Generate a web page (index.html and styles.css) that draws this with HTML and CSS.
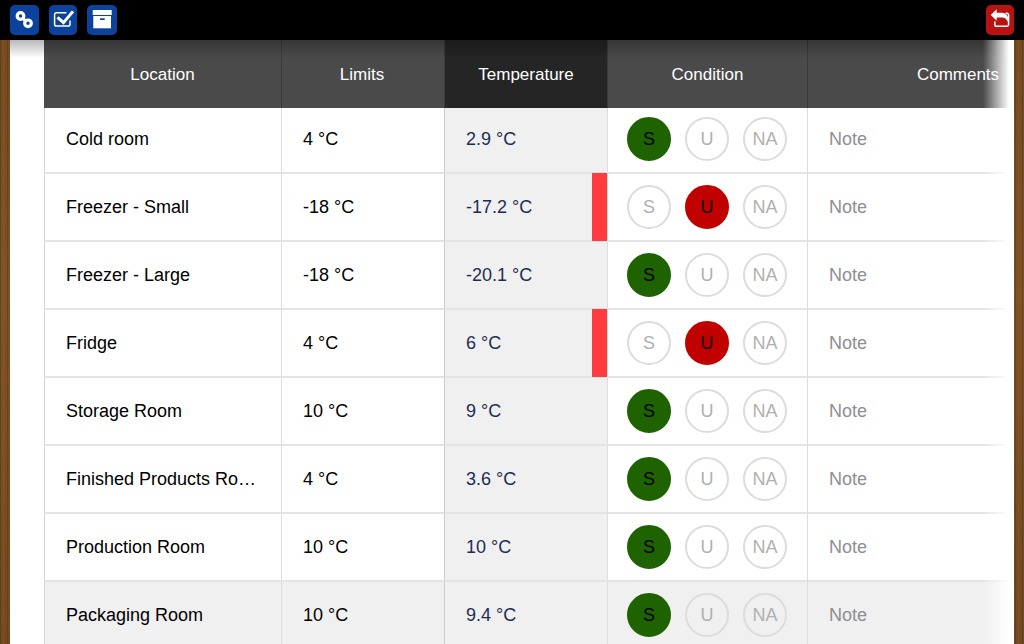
FILE: index.html

```html
<!DOCTYPE html>
<html lang="en">
<head>
    <meta charset="UTF-8">
    <meta name="viewport" content="width=device-width, initial-scale=1.0">
    <title>Temperature Log</title>
    <link rel="stylesheet" href="styles.css">
</head>
<body>
    <div class="toolbar">
        <div class="toolbar-group">
            <button class="tool-btn tool-blue" type="button" aria-label="Links">
                <svg viewBox="0 0 24 24" width="24" height="24"><g fill="none" stroke="#fff"><circle cx="8.5" cy="8" r="3.3" stroke-width="3.2"/><circle cx="16" cy="15.3" r="3.3" stroke-width="3.2"/><path d="M10.5 10l3.5 3.4" stroke-width="3"/></g></svg>
            </button>
            <button class="tool-btn tool-blue" type="button" aria-label="Tasks">
                <svg viewBox="0 0 24 24" width="24" height="24"><path d="M19 12.5v3.7a1.8 1.8 0 0 1-1.8 1.8H5.4a1.8 1.8 0 0 1-1.8-1.8V6.5a1.8 1.8 0 0 1 1.8-1.8h10" fill="none" stroke="#fff" stroke-width="1.5"/><path d="M6.5 9.3l6 5.4L22 3.4" fill="none" stroke="#fff" stroke-width="3"/></svg>
            </button>
            <button class="tool-btn tool-blue tool-wide" type="button" aria-label="Archive">
                <svg viewBox="0 0 26 24" width="26" height="24"><path d="M3.7 2h19v5h-19z" fill="#fff"/><path d="M4.3 8h17.7v12.3H4.3z" fill="#fff"/><path d="M11 10.3h4.7V12H11z" fill="#0b429c"/></svg>
            </button>
        </div>
        <button class="tool-btn tool-red" type="button" aria-label="Back">
            <svg viewBox="0 0 24 24" width="24" height="24"><path d="M6.8 13.5v3a1.8 1.8 0 0 0 1.8 1.8h10.200a1.800 1.800 0 0 0 1.800-1.800V7a1.800 1.800 0 0 0-1.800-1.800h-1" fill="none" stroke="#fff" stroke-width="1.5"/><path d="M2.700 7L8.700 1.300v3.400H14c4.500 0 6.800 3 6.800 11.300-1.500-4.500-3.800-6.500-6.800-6.500H8.700v3.200z" fill="#fff"/></svg>
        </button>
    </div>

    <div class="sheet">
        <table class="log-table">
            <thead>
                <tr>
                    <th class="col-location">Location</th>
                    <th class="col-limits">Limits</th>
                    <th class="col-temp">Temperature</th>
                    <th class="col-condition">Condition</th>
                    <th class="col-comments">Comments</th>
                </tr>
            </thead>
            <tbody>
                <tr>
                    <td class="cell-name">Cold room</td>
                    <td>4 °C</td>
                    <td class="cell-temp">2.9 °C</td>
                    <td><div class="choices"><span class="choice safe">S</span><span class="choice">U</span><span class="choice">NA</span></div></td>
                    <td class="cell-note">Note</td>
                </tr>
                <tr>
                    <td class="cell-name">Freezer - Small</td>
                    <td>-18 °C</td>
                    <td class="cell-temp out-of-range">-17.2 °C</td>
                    <td><div class="choices"><span class="choice">S</span><span class="choice unsafe">U</span><span class="choice">NA</span></div></td>
                    <td class="cell-note">Note</td>
                </tr>
                <tr>
                    <td class="cell-name">Freezer - Large</td>
                    <td>-18 °C</td>
                    <td class="cell-temp">-20.1 °C</td>
                    <td><div class="choices"><span class="choice safe">S</span><span class="choice">U</span><span class="choice">NA</span></div></td>
                    <td class="cell-note">Note</td>
                </tr>
                <tr>
                    <td class="cell-name">Fridge</td>
                    <td>4 °C</td>
                    <td class="cell-temp out-of-range">6 °C</td>
                    <td><div class="choices"><span class="choice">S</span><span class="choice unsafe">U</span><span class="choice">NA</span></div></td>
                    <td class="cell-note">Note</td>
                </tr>
                <tr>
                    <td class="cell-name">Storage Room</td>
                    <td>10 °C</td>
                    <td class="cell-temp">9 °C</td>
                    <td><div class="choices"><span class="choice safe">S</span><span class="choice">U</span><span class="choice">NA</span></div></td>
                    <td class="cell-note">Note</td>
                </tr>
                <tr>
                    <td class="cell-name"><div class="truncate">Finished Products Room</div></td>
                    <td>4 °C</td>
                    <td class="cell-temp">3.6 °C</td>
                    <td><div class="choices"><span class="choice safe">S</span><span class="choice">U</span><span class="choice">NA</span></div></td>
                    <td class="cell-note">Note</td>
                </tr>
                <tr>
                    <td class="cell-name">Production Room</td>
                    <td>10 °C</td>
                    <td class="cell-temp">10 °C</td>
                    <td><div class="choices"><span class="choice safe">S</span><span class="choice">U</span><span class="choice">NA</span></div></td>
                    <td class="cell-note">Note</td>
                </tr>
                <tr class="row-active">
                    <td class="cell-name">Packaging Room</td>
                    <td>10 °C</td>
                    <td class="cell-temp">9.4 °C</td>
                    <td><div class="choices"><span class="choice safe">S</span><span class="choice">U</span><span class="choice">NA</span></div></td>
                    <td class="cell-note">Note</td>
                </tr>
            </tbody>
        </table>
        <div class="top-shade"></div>
        <div class="edge-fade"></div>
    </div>
</body>
</html>
```

FILE: styles.css

```css
* {
    box-sizing: border-box;
}

html, body {
    height: 100%;
}

body {
    margin: 0;
    overflow: hidden;
    display: flex;
    flex-direction: column;
    font-family: "Liberation Sans", Arial, sans-serif;
    color: #000;
    background-color: #7a4f24;
    background-image:
        repeating-linear-gradient(90deg, rgba(40, 20, 5, 0.22) 0 1px, transparent 1px 3px, rgba(160, 110, 60, 0.2) 3px 4px, transparent 4px 7px),
        linear-gradient(rgba(60, 35, 10, 0.12), rgba(150, 105, 55, 0.12) 45%, rgba(60, 35, 10, 0.12));
}

.toolbar {
    flex: none;
    height: 40px;
    padding: 5px 10px;
    display: flex;
    justify-content: space-between;
    align-items: flex-start;
    background-color: #000;
}

.toolbar-group {
    display: flex;
    gap: 10px;
}

.tool-btn {
    width: 28.5px;
    height: 30px;
    padding: 0;
    border: none;
    border-radius: 5px;
    display: flex;
    align-items: center;
    justify-content: center;
}

.tool-wide {
    width: 30px;
}

.tool-blue {
    background-color: #0b429c;
}

.tool-red {
    width: 28px;
    background-color: #b91212;
}

.sheet {
    position: relative;
    flex: 1;
    margin: 0 10px;
    padding-left: 34px;
    overflow: hidden;
    background-color: #fff;
}

.log-table {
    width: 1065px;
    table-layout: fixed;
    border-collapse: separate;
    border-spacing: 0;
    font-size: 18px;
}

.log-table th {
    height: 68px;
    padding: 2px 0 0;
    font-size: 17px;
    font-weight: normal;
    color: #fff;
    background-color: #4a4a4a;
    border-right: 1px solid #3a3a3a;
}

.log-table th.col-temp {
    background-color: #252525;
}

.log-table th.col-limits {
    padding-right: 2px;
}

.col-location {
    width: 238px;
}

.col-limits {
    width: 163px;
}

.col-temp {
    width: 163px;
}

.col-condition {
    width: 200px;
}

.col-comments {
    width: 301px;
}

.log-table td {
    height: 68px;
    padding: 0 21px;
    border-right: 1px solid #dcdcdc;
    border-bottom: 2px solid #e4e4e4;
}

.log-table td:first-child {
    border-left: 1px solid #d4d4d4;
}

/* the first row starts a little way under the header */
.log-table tbody tr:first-child td {
    height: 66px;
    padding-bottom: 2px;
}

.log-table td:nth-child(2) {
    border-right-color: #cccccc;
}

.log-table td.cell-temp {
    position: relative;
    color: #1c2c52;
    background-color: #f0f0f0;
}

.out-of-range::after {
    content: "";
    position: absolute;
    top: -1px;
    right: 0;
    bottom: -1px;
    width: 15px;
    background-color: #ff3b3f;
}

.log-table td.cell-note {
    color: #8e8e93;
    border-right: none;
}

.log-table .row-active td {
    background-color: #f0f0f0;
}

.truncate {
    overflow: hidden;
    white-space: nowrap;
    text-overflow: ellipsis;
}

.choices {
    display: flex;
    gap: 14px;
    margin-left: -2px;
}

.choice {
    flex: none;
    width: 44px;
    height: 44px;
    border-radius: 50%;
    display: flex;
    align-items: center;
    justify-content: center;
    border: 2px solid #dcdcdc;
    color: #b0b0b0;
    background-color: #fff;
}

.row-active .choice {
    background-color: #f0f0f0;
}

.choice.safe {
    color: #000;
    background-color: #1f6200;
    border-color: #1f6200;
}

.choice.unsafe {
    color: #000;
    background-color: #c10000;
    border-color: #c10000;
}

/* shadow dropped by the toolbar onto the top of the sheet */
.top-shade {
    position: absolute;
    top: 0;
    left: 0;
    right: 0;
    height: 18px;
    background: linear-gradient(rgba(0, 0, 0, 0.28), rgba(0, 0, 0, 0));
}

/* white fade where the table runs off the right edge */
.edge-fade {
    position: absolute;
    top: 0;
    right: 0;
    bottom: 0;
    width: 31px;
    background: linear-gradient(90deg, rgba(255, 255, 255, 0), #fff 84%);
}
```
